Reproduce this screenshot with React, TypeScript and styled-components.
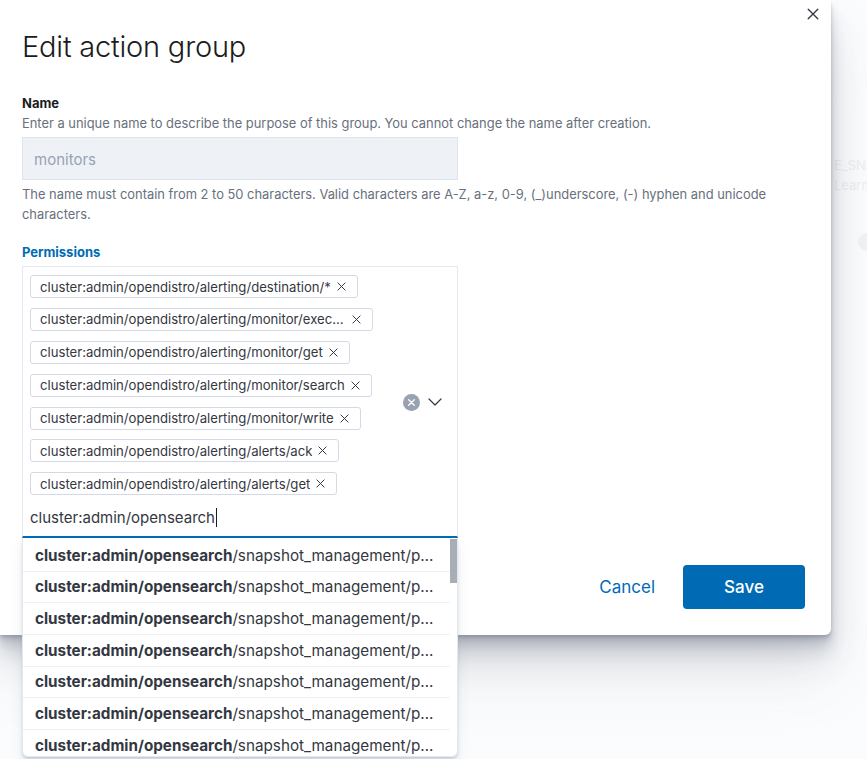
import React from "react";
import styled, { createGlobalStyle } from "styled-components";

const Global = createGlobalStyle`
  html, body { margin: 0; padding: 0; }
  body {
    background: #fbfcfd;
    font-family: Inter, "Noto Sans", "Liberation Sans", sans-serif;
    overflow: hidden;
  }
`;

const Page = styled.div`
  display: flex;
  height: 759px;
  overflow: hidden;
  background: #fbfcfd;
`;

const Modal = styled.div`
  position: relative;
  z-index: 1;
  flex: none;
  width: 831px;
  height: 635px;
  background: #fff;
  border-radius: 0 0 6px 0;
  box-shadow: 0 2px 2px rgba(65, 78, 101, 0.14), 0 4px 4px rgba(65, 78, 101, 0.14),
    0 8px 8px rgba(65, 78, 101, 0.14), 0 16px 16px rgba(65, 78, 101, 0.14),
    0 24px 32px rgba(65, 78, 101, 0.12), 0 40px 64px rgba(65, 78, 101, 0.1);
  display: flex;
  flex-direction: column;
`;

const CloseButton = styled.button`
  position: absolute;
  top: 6px;
  right: 10px;
  width: 16px;
  height: 16px;
  padding: 0;
  border: 0;
  background: none;
  display: flex;
  align-items: center;
  justify-content: center;
`;

const Body = styled.div`
  flex: 1;
  padding: 29px 22px 0 22px;
  display: flex;
  flex-direction: column;
`;

const Title = styled.h1`
  margin: 0;
  font-size: 29px;
  line-height: 36px;
  font-weight: 300;
  color: #1a1c21;
  letter-spacing: -0.2px;
`;

const FieldLabel = styled.div<{ $active?: boolean }>`
  font-size: 13px;
  line-height: 18px;
  font-weight: 700;
  color: ${(p) => (p.$active ? "#006bb4" : "#1a1c21")};
  margin-top: ${(p) => (p.$active ? "18px" : "29px")};
`;

const HelpText = styled.div<{ $top: number }>`
  font-size: 12.9px;
  line-height: 20px;
  color: #69707d;
  margin-top: ${(p) => p.$top}px;
  max-width: 790px;
`;

const DisabledInput = styled.div`
  margin-top: 3px;
  width: 436px;
  height: 43px;
  box-sizing: border-box;
  background: #eef2f7;
  border: 1px solid #dfe4ec;
  padding: 1px 11px 0;
  display: flex;
  align-items: center;
  font-size: 15px;
  color: #98a2b3;
`;

const ComboWrap = styled.div`
  position: relative;
  width: 436px;
  margin-top: 5px;
`;

const Combo = styled.div`
  display: flex;
  height: 272px;
  box-sizing: border-box;
  border: 1px solid #e6e9ef;
  border-bottom: 2px solid #006bb4;
  background: #fff;
`;

const PillArea = styled.div`
  flex: 1;
  min-width: 0;
  display: flex;
  flex-direction: column;
  align-items: flex-start;
  padding: 8px 0 0 7px;
`;

const Pill = styled.div`
  display: inline-flex;
  align-items: center;
  gap: 6px;
  height: 23px;
  max-width: 343px;
  box-sizing: border-box;
  padding: 0 11px 0 9px;
  border: 1px solid #d3dae6;
  border-radius: 3px;
  margin-bottom: 9.9px;
  font-size: 13.15px;
  color: #343741;
  background: #fff;
`;

const PillText = styled.span`
  white-space: nowrap;
  overflow: hidden;
  text-overflow: ellipsis;
  min-width: 0;
`;

const SearchLine = styled.div`
  display: flex;
  align-items: center;
  height: 24px;
  font-size: 15px;
  color: #343741;
`;

const Caret = styled.span`
  display: inline-block;
  width: 1px;
  height: 19px;
  background: #1a1c21;
  margin-left: 1px;
`;

const ComboIcons = styled.div`
  align-self: center;
  display: flex;
  align-items: center;
  gap: 8px;
  padding: 1px 15px 0 0;
`;

const ClearCircle = styled.span`
  width: 17px;
  height: 17px;
  border-radius: 50%;
  background: #98a2b3;
  display: flex;
  align-items: center;
  justify-content: center;
`;

const Dropdown = styled.div`
  position: absolute;
  top: 100%;
  left: 0;
  width: 436px;
  height: 219px;
  box-sizing: border-box;
  padding-top: 2px;
  background: #fff;
  border: 1px solid #e3e7ee;
  border-top: 0;
  border-radius: 0 0 6px 6px;
  overflow: hidden;
  box-shadow: 0 6px 12px -1px rgba(152, 162, 179, 0.25), 0 4px 4px -1px rgba(152, 162, 179, 0.2),
    0 2px 2px 0 rgba(152, 162, 179, 0.2);
  z-index: 2;
`;

const OptionRow = styled.div`
  height: 31.67px;
  box-sizing: border-box;
  margin-right: 7px;
  padding: 0 14px 0 12px;
  display: flex;
  align-items: center;
  border-bottom: 1px solid #eef0f4;
  font-size: 15.25px;
  color: #343741;
`;

const OptionText = styled.span`
  white-space: nowrap;
  overflow: hidden;
  text-overflow: ellipsis;
`;

const Match = styled.strong`
  font-weight: 700;
`;

const ScrollThumb = styled.div`
  position: absolute;
  top: 1px;
  right: 0;
  width: 7px;
  height: 44px;
  background: #a9adb5;
`;

const Footer = styled.div`
  display: flex;
  justify-content: flex-end;
  align-items: center;
  gap: 16px;
  padding: 0 26px 26px 0;
`;

const EmptyButton = styled.button`
  border: 0;
  background: none;
  padding: 0 12px;
  height: 44px;
  font-family: inherit;
  font-size: 17px;
  color: #006bb4;
`;

const PrimaryButton = styled.button`
  width: 122px;
  height: 44px;
  border: 0;
  border-radius: 4px;
  background: #006bb4;
  color: #fff;
  font-family: inherit;
  font-size: 17px;
  font-weight: 500;
`;

const Behind = styled.div`
  flex: 1;
  min-width: 0;
  overflow: hidden;
  padding: 155px 0 0 3px;
  color: #eceef2;
  font-size: 13px;
  line-height: 20px;
  white-space: nowrap;
`;

const BehindCircle = styled.div`
  width: 18px;
  height: 18px;
  border-radius: 50%;
  background: #f1f2f5;
  margin: 38px 0 0 24px;
`;

const pills = [
  "cluster:admin/opendistro/alerting/destination/*",
  "cluster:admin/opendistro/alerting/monitor/execute",
  "cluster:admin/opendistro/alerting/monitor/get",
  "cluster:admin/opendistro/alerting/monitor/search",
  "cluster:admin/opendistro/alerting/monitor/write",
  "cluster:admin/opendistro/alerting/alerts/ack",
  "cluster:admin/opendistro/alerting/alerts/get",
];

const options = [
  "policy/create",
  "policy/delete",
  "policy/explain",
  "policy/get",
  "policy/start",
  "policy/stop",
  "policy/update",
];

const SmallX = ({ size = 9, color = "#343741", w = 1.2 }: { size?: number; color?: string; w?: number }) => (
  <svg width={size} height={size} viewBox="0 0 10 10" fill="none" style={{ flex: "none" }}>
    <path d="M1 1L9 9M9 1L1 9" stroke={color} strokeWidth={w} strokeLinecap="round" />
  </svg>
);

export default function App() {
  return (
    <>
      <Global />
      <Page>
        <Modal>
          <CloseButton aria-label="Close">
            <SmallX size={12} color="#343741" w={1.1} />
          </CloseButton>
          <Body>
            <Title>Edit action group</Title>
            <FieldLabel>Name</FieldLabel>
            <HelpText $top={2}>
              Enter a unique name to describe the purpose of this group. You cannot change the name after creation.
            </HelpText>
            <DisabledInput>monitors</DisabledInput>
            <HelpText $top={5}>
              The name must contain from 2 to 50 characters. Valid characters are A-Z, a-z, 0-9, (_)underscore, (-)
              hyphen and unicode characters.
            </HelpText>
            <FieldLabel $active>Permissions</FieldLabel>
            <ComboWrap>
              <Combo>
                <PillArea>
                  {pills.map((p) => (
                    <Pill key={p}>
                      <PillText>{p}</PillText>
                      <SmallX size={9} color="#343741" w={1.1} />
                    </Pill>
                  ))}
                  <SearchLine>
                    cluster:admin/opensearch
                    <Caret />
                  </SearchLine>
                </PillArea>
                <ComboIcons>
                  <ClearCircle>
                    <SmallX size={7} color="#fff" w={1.9} />
                  </ClearCircle>
                  <svg width="14" height="8" viewBox="0 0 14 8" fill="none">
                    <path d="M1 1L7 7L13 1" stroke="#343741" strokeWidth="1.2" strokeLinecap="round" strokeLinejoin="round" />
                  </svg>
                </ComboIcons>
              </Combo>
              <Dropdown>
                {options.map((o) => (
                  <OptionRow key={o}>
                    <OptionText>
                      <Match>cluster:admin/opensearch</Match>/snapshot_management/{o}
                    </OptionText>
                  </OptionRow>
                ))}
                <ScrollThumb />
              </Dropdown>
            </ComboWrap>
          </Body>
          <Footer>
            <EmptyButton>Cancel</EmptyButton>
            <PrimaryButton>Save</PrimaryButton>
          </Footer>
        </Modal>
        <Behind>
          <div>E_SNAPSHOT</div>
          <div>Learn more</div>
          <BehindCircle />
        </Behind>
      </Page>
    </>
  );
}
